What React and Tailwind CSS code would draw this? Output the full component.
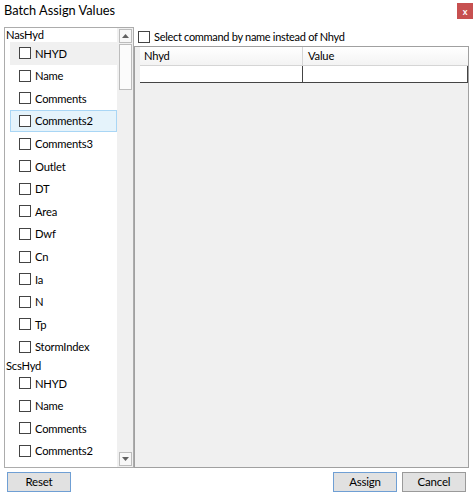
import React from 'react';

const nasFields = ['NHYD', 'Name', 'Comments', 'Comments2', 'Comments3', 'Outlet', 'DT', 'Area', 'Dwf', 'Cn', 'Ia', 'N', 'Tp', 'StormIndex'];
const scsFields = ['NHYD', 'Name', 'Comments', 'Comments2'];

const CheckBox = () => (
    <span className="block w-[12px] h-[12px] border border-[#444] bg-white shrink-0" />
);

const FieldRow = ({ label, selected, hovered }) => {
    let tone = 'border-transparent';
    if (selected) tone = 'bg-[#e5f3fb] border-[#a9d6f5]';
    if (hovered) tone = 'bg-[#f0f0f0] border-transparent';
    return (
        <div className={`flex items-center gap-[4px] h-[22.6px] ml-[5px] pl-[8px] border ${tone}`}>
            <CheckBox />
            <span className="leading-none">{label}</span>
        </div>
    );
};

const GroupHeader = ({ name, h }) => (
    <div className={`flex items-center pl-[1px] leading-none ${h}`}>{name}</div>
);

const Arrow = ({ up }) => (
    <svg width="7" height="4" viewBox="0 0 7 4">
        {up ? <path d="M0 4 L3.5 0 L7 4 Z" fill="#606060" /> : <path d="M0 0 L3.5 4 L7 0 Z" fill="#606060" />}
    </svg>
);

const Button = ({ children, primary }) => (
    <button
        className={`w-[64px] h-[20px] bg-[#e1e1e1] border text-[11.5px] leading-none text-black ${primary ? 'border-[#6f9fd4]' : 'border-[#9a9a9a]'}`}
    >
        {children}
    </button>
);

export default function App() {
    return (
        <div className="w-[474px] h-[499px] bg-white flex flex-col text-[11.2px] tracking-[-0.2px] text-black font-['Lato',sans-serif] overflow-hidden">
            {/* Title bar */}
            <div className="h-[27px] flex items-start justify-between shrink-0">
                <span className="pl-[4px] pt-[2px] leading-[16px] text-[12.8px] tracking-normal">Batch Assign Values</span>
                <span className="mt-[3px] mr-[1px] w-[16px] h-[16px] bg-[#c75050] text-white text-[9px] font-bold flex items-center justify-center leading-none">x</span>
            </div>

            {/* Main */}
            <div className="flex h-[441px] pl-[4px] pr-[5px] shrink-0">
                {/* Field list */}
                <div className="w-[130px] h-full border border-[#acacac] flex shrink-0">
                    <div className="flex-1 overflow-hidden">
                        <GroupHeader name="NasHyd" h="h-[14px]" />
                        {nasFields.map((f, i) => (
                            <FieldRow key={'n' + i} label={f} hovered={i === 0} selected={i === 3} />
                        ))}
                        <GroupHeader name="ScsHyd" h="h-[13.6px]" />
                        {scsFields.map((f, i) => (
                            <FieldRow key={'s' + i} label={f} />
                        ))}
                    </div>
                    <div className="w-[16px] bg-[#f0f0f0] flex flex-col items-center py-[1px] shrink-0">
                        <div className="w-[13px] h-[14px] border border-[#bcbcbc] bg-[#f7f7f7] flex items-center justify-center">
                            <Arrow up />
                        </div>
                        <div className="w-[13px] h-[46px] border border-[#bcbcbc] bg-[#fbfbfb] mt-[1px]" />
                        <div className="flex-1" />
                        <div className="w-[13px] h-[14px] border border-[#bcbcbc] bg-[#f7f7f7] flex items-center justify-center">
                            <Arrow />
                        </div>
                    </div>
                </div>

                {/* Right side */}
                <div className="flex-1 flex flex-col">
                    <div className="h-[19px] flex items-center gap-[4px] pl-[4px] shrink-0">
                        <CheckBox />
                        <span className="leading-none tracking-[-0.3px] text-[11px]">Select command by name instead of Nhyd</span>
                    </div>
                    <div className="flex-1 border border-[#a0a0a0] bg-[#f0f0f0] pl-[5px]">
                        <div className="flex h-[19px] bg-gradient-to-b from-white to-[#f3f3f3] border-b border-[#d5d5d5]">
                            <div className="w-[163px] border-r border-[#d5d5d5] flex items-center pl-[4px]">Nhyd</div>
                            <div className="flex-1 flex items-center pl-[5px]">Value</div>
                        </div>
                        <div className="flex h-[17px] bg-white border-b border-[#444]">
                            <div className="w-[163px] border-r border-[#444]" />
                            <div className="flex-1 border-r border-[#444]" />
                        </div>
                    </div>
                </div>
            </div>

            {/* Buttons */}
            <div className="flex items-center justify-between pl-[7px] pr-[8px] mt-[4px]">
                <Button primary>Reset</Button>
                <div className="flex gap-[5px]">
                    <Button primary>Assign</Button>
                    <Button>Cancel</Button>
                </div>
            </div>
        </div>
    );
}
